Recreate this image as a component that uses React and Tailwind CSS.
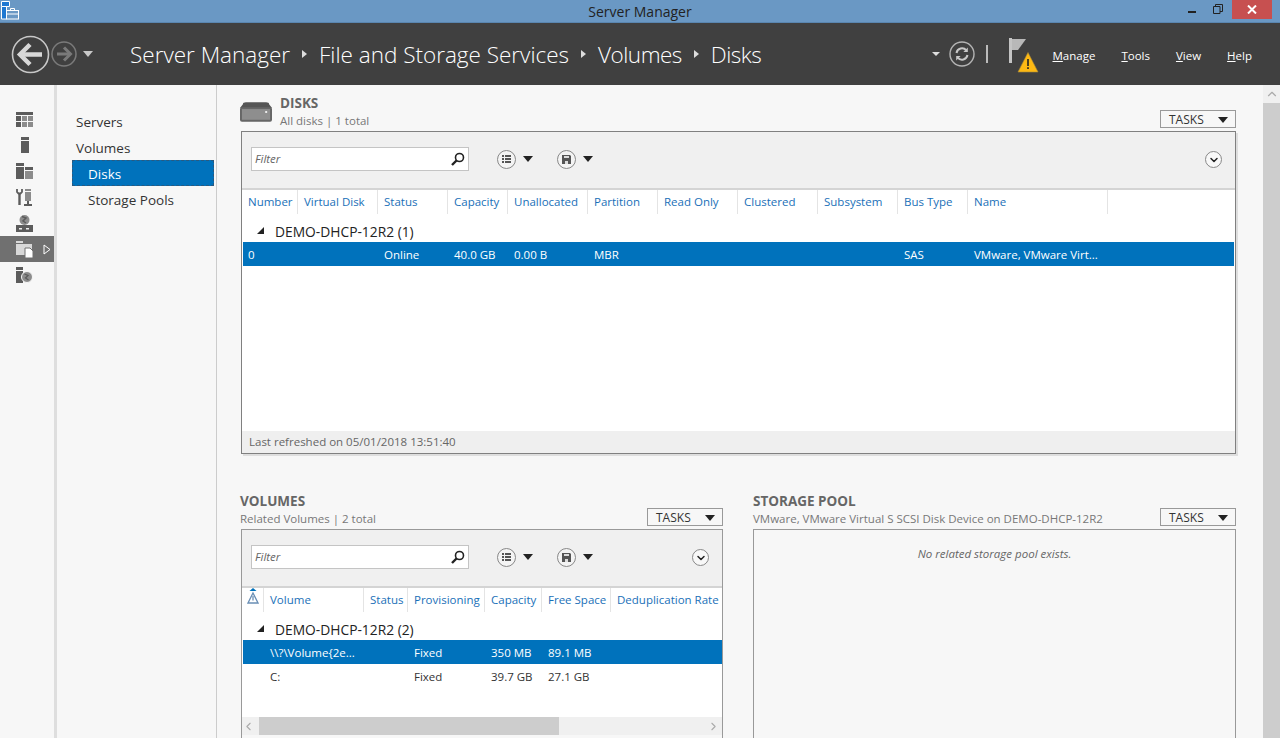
import { ChevronDown, ChevronLeft, ChevronRight, ChevronUp } from 'lucide-react';

const diskColumns = [
  ['Number', 56], ['Virtual Disk', 80], ['Status', 70], ['Capacity', 60], ['Unallocated', 80],
  ['Partition', 70], ['Read Only', 80], ['Clustered', 80], ['Subsystem', 80], ['Bus Type', 70], ['Name', 140],
];
const diskRow = ['0', '', 'Online', '40.0 GB', '0.00 B', 'MBR', '', '', '', 'SAS', 'VMware, VMware Virt...'];

const volumeColumns = [
  ['', 22], ['Volume', 100], ['Status', 44], ['Provisioning', 77], ['Capacity', 57], ['Free Space', 69], ['Deduplication Rate', 112],
];
const volumeRows = [
  ['', '\\\\?\\Volume{2e...', '', 'Fixed', '350 MB', '89.1 MB', ''],
  ['', 'C:', '', 'Fixed', '39.7 GB', '27.1 GB', ''],
];

function Caret({ className = '' }) {
  return <span className={`inline-block w-0 h-0 border-x-[5.5px] border-x-transparent border-t-[6px] border-t-[#222] ${className}`} />;
}

function BackIcon() {
  return (
    <svg width="39" height="39" viewBox="0 0 39 39" fill="none">
      <circle cx="19.5" cy="19.5" r="18" stroke="#c8c8c8" strokeWidth="1.6" />
      <path d="M9 19.5h22" stroke="#d8d8d8" strokeWidth="4.5" />
      <path d="M19 9.5 9 19.5l10 10" stroke="#d8d8d8" strokeWidth="4.5" />
    </svg>
  );
}

function ForwardIcon() {
  return (
    <svg width="26" height="26" viewBox="0 0 26 26" fill="none">
      <circle cx="13" cy="13" r="12" stroke="#7a7a7a" strokeWidth="1.5" />
      <path d="M6 13h13" stroke="#7a7a7a" strokeWidth="3" />
      <path d="M13 6.5 19.5 13 13 19.5" stroke="#7a7a7a" strokeWidth="3" />
    </svg>
  );
}

function RefreshIcon() {
  return (
    <svg width="26" height="26" viewBox="0 0 26 26" fill="none">
      <circle cx="13" cy="13" r="12" stroke="#b4b4b4" strokeWidth="1.4" />
      <path d="M7.5 12a5.6 5.6 0 0 1 9.8-2.6" stroke="#c8c8c8" strokeWidth="2" />
      <path d="M18.5 14a5.6 5.6 0 0 1-9.8 2.6" stroke="#c8c8c8" strokeWidth="2" />
      <path d="M18.8 6.5v4.4h-4.4z" fill="#c8c8c8" />
      <path d="M7.2 19.5v-4.4h4.4z" fill="#c8c8c8" />
    </svg>
  );
}

function FlagIcon() {
  return (
    <svg width="30" height="37" viewBox="0 0 30 37" fill="none">
      <rect x="0" y="0" width="3" height="25" fill="#c4c4c4" />
      <path d="M3 1h14L9 12H3z" fill="#b8b8b8" />
      <path d="M19 14.5 29 34H9z" fill="#fdb813" stroke="#a88a3a" strokeWidth="0.6" />
      <path d="M19 21v7" stroke="#222" strokeWidth="1.6" />
      <rect x="18.2" y="29.2" width="1.6" height="1.8" fill="#222" />
    </svg>
  );
}

function AppIcon() {
  return (
    <svg width="18" height="19" viewBox="0 0 18 19" fill="none">
      <path d="M.5.5h8v5h-8z" fill="#1f78d1" stroke="#fff" />
      <path d="M.5 5.5v12.500h5" fill="#1f78d1" />
      <path d="M.5 5.500h5v12.500h-5z" fill="#1f78d1" stroke="#fff" />
      <rect x="5.500" y="9.500" width="12" height="8.500" fill="#6a98c4" stroke="#fff" />
      <path d="M9.500 9.500V7.500h4v2M5.500 13h12" stroke="#fff" />
    </svg>
  );
}

function RailIcon({ name, active }) {
  const c = '#5c5c5c';
  const l = '#8c8c8c';
  if (name === 'dashboard') {
    return (
      <svg width="17" height="15" viewBox="0 0 17 15">
        <rect width="17" height="3" fill={c} />
        <rect y="4" width="5" height="5" fill={c} /><rect x="6" y="4" width="5" height="5" fill={l} /><rect x="12" y="4" width="5" height="5" fill={l} />
        <rect y="10" width="5" height="5" fill={c} /><rect x="6" y="10" width="5" height="5" fill={l} /><rect x="12" y="10" width="5" height="5" fill={l} />
      </svg>
    );
  }
  if (name === 'local') {
    return (
      <svg width="8" height="16" viewBox="0 0 8 16">
        <rect width="8" height="3" fill={c} /><rect y="4" width="8" height="12" fill={c} />
      </svg>
    );
  }
  if (name === 'all') {
    return (
      <svg width="17" height="16" viewBox="0 0 17 16">
        <rect width="8" height="3" fill={c} /><rect y="4" width="8" height="12" fill={c} />
        <rect x="9" y="4" width="8" height="3" fill={c} /><rect x="9" y="8" width="8" height="8" fill={l} />
      </svg>
    );
  }
  if (name === 'tools') {
    return (
      <svg width="17" height="17" viewBox="0 0 17 17" fill="none">
        <path d="M1 0v3l1.500 1.500h2L6 3V0" stroke={c} strokeWidth="1.800" />
        <path d="M3.500 4.500V16" stroke={c} strokeWidth="2.400" />
        <rect x="9" y="0" width="6" height="2" fill={l} /><rect x="9" y="3" width="6" height="9" fill={l} />
        <path d="M12 12v3" stroke={c} strokeWidth="2" />
        <path d="M8 16h8" stroke={c} strokeWidth="2" />
      </svg>
    );
  }
  if (name === 'network') {
    return (
      <svg width="17" height="17" viewBox="0 0 17 17">
        <circle cx="8.500" cy="5" r="5" fill={l} />
        <path d="M6 1.500 10 3 7 6l3 2" stroke={c} strokeWidth="1.500" fill="none" />
        <rect y="10" width="17" height="7" fill={c} />
        <rect x="3" y="13" width="3" height="1.500" fill="#eee" /><rect x="10" y="13" width="3" height="1.500" fill="#eee" />
      </svg>
    );
  }
  if (name === 'storage') {
    return (
      <svg width="17" height="17" viewBox="0 0 17 17">
        <path d="M0 0h7v2H0z" fill={active ? '#d8d8d8' : c} />
        <rect y="3" width="16" height="11" fill={active ? '#d8d8d8' : c} />
        <path d="M9 7h5l3 3v7H9z" fill="#fff" stroke="#707070" strokeWidth="1" />
      </svg>
    );
  }
  return (
    <svg width="17" height="16" viewBox="0 0 17 16">
      <rect width="7" height="3" fill={c} /><rect y="4" width="7" height="12" fill={c} />
      <circle cx="11" cy="10" r="5.500" fill={l} stroke="#f7f7f7" />
      <path d="M8.500 7 12 8.500 9.500 11l3 2" stroke={c} strokeWidth="1.300" fill="none" />
    </svg>
  );
}

function SearchGlyph() {
  return (
    <svg width="14" height="14" viewBox="0 0 14 14" fill="none">
      <circle cx="8.500" cy="5.500" r="4" stroke="#222" strokeWidth="1.600" />
      <path d="M5.500 8.500 1 13" stroke="#222" strokeWidth="2.400" />
    </svg>
  );
}

function RoundBtn({ kind }) {
  return (
    <span className="w-[19px] h-[19px] rounded-full border border-[#888] bg-[#f4f4f4] flex items-center justify-center">
      {kind === 'list' ? (
        <svg width="9" height="8" viewBox="0 0 9 8" fill="#555">
          <rect width="2" height="2" /><rect x="3" width="6" height="2" />
          <rect y="3" width="2" height="2" /><rect x="3" y="3" width="6" height="2" />
          <rect y="6" width="2" height="2" /><rect x="3" y="6" width="6" height="2" />
        </svg>
      ) : (
        <svg width="9" height="9" viewBox="0 0 9 9">
          <path d="M0 0h8l1 1v8H0z" fill="#555" />
          <rect x="2" y="1" width="5" height="2" fill="#ddd" />
          <rect x="3" y="6" width="3" height="3" fill="#ddd" />
        </svg>
      )}
    </span>
  );
}

function Toolbar({ collapseClass }) {
  return (
    <div className="h-[58px] bg-[#f0f0f0] border-b-2 border-[#d4d4d4] flex items-start pt-[15px] pl-[9px] shrink-0">
      <div className="w-[218px] h-[24px] bg-white border border-[#c4c4c4] flex items-center justify-between pl-[3px] pr-[3px]">
        <span className="italic text-[11.500px] text-[#666]">Filter</span>
        <SearchGlyph />
      </div>
      <div className="flex items-center h-[24px] ml-[28px] gap-[7px]"><RoundBtn kind="list" /><Caret /></div>
      <div className="flex items-center h-[24px] ml-[24px] gap-[7px]"><RoundBtn kind="save" /><Caret /></div>
      <span className={`w-[17px] h-[17px] mt-[4px] rounded-full border border-[#888] bg-[#f8f8f8] flex items-center justify-center ml-auto ${collapseClass}`}>
        <ChevronDown size={12} strokeWidth={3} color="#222" />
      </span>
    </div>
  );
}

function HeaderRow({ columns, sortIcon }) {
  return (
    <div className="flex h-[24px] text-[11.500px] text-[#1a70b8] shrink-0">
      {columns.map(([label, width], i) => (
        <div key={i} style={{ width }} className={`h-full pt-[3px] pl-[6px] whitespace-nowrap overflow-hidden shrink-0 ${i === columns.length - 1 && sortIcon ? '' : 'border-r border-[#e4e4e4]'}`}>
          {label}
          {sortIcon && i === 0 && (
            <svg width="12" height="18" viewBox="0 0 12 18" className="-mt-[3px] -ml-[1px]">
              <path d="M6 0 9.500 3h-7z" fill="#0072bc" />
              <path d="M6 5 11 15H1z" fill="none" stroke="#6a8fb5" strokeWidth="1.300" />
              <path d="M6 8v4.500" stroke="#6a8fb5" strokeWidth="1.300" />
            </svg>
          )}
        </div>
      ))}
    </div>
  );
}

function GroupRow({ label }) {
  return (
    <div className="h-[23px] mt-[5px] flex items-center pl-[15px] text-[13.800px] text-[#222] shrink-0">
      <span className="w-0 h-0 border-l-[7px] border-l-transparent border-b-[7px] border-b-[#222] mr-[11px]" />
      <span className="pt-[3px]">{label}</span>
    </div>
  );
}

function DataRow({ columns, cells, selected }) {
  return (
    <div className={`flex h-[24px] items-center pt-[1px] text-[11.500px] shrink-0 ${selected ? 'bg-[#0072bc] text-white' : 'text-[#333]'}`}>
      {columns.map(([, width], i) => (
        <div key={i} style={{ width }} className="pl-[5px] whitespace-nowrap overflow-hidden shrink-0">{cells[i]}</div>
      ))}
    </div>
  );
}

function TasksBtn() {
  return (
    <div className="w-[76px] h-[18px] mb-[1px] pt-[1px] bg-[#f7f7f7] border border-[#999] flex items-center justify-between pl-[8px] pr-[7px] text-[12px] text-[#333] shrink-0">
      TASKS<Caret />
    </div>
  );
}

function SectionHead({ title, sub, icon }) {
  return (
    <div className="flex items-end justify-between">
      <div className="flex items-center min-w-0">
        {icon && (
          <svg width="32" height="20" viewBox="0 0 33 20" className="mr-[8px] shrink-0">
            <path d="M3 2Q3 0 6 0h21q3 0 3 2l3 4H0z" fill="#555" />
            <rect y="5" width="33" height="15" rx="2" fill="#666" />
            <rect x="2" y="7" width="29" height="11" fill="#8e8e8e" />
            <rect x="26" y="9" width="2" height="2" fill="#eee" />
          </svg>
        )}
        <div>
          <div className="text-[13.500px] leading-[18px] font-bold text-[#666]">{title}</div>
          <div className="text-[11.500px] leading-[17px] text-[#777] whitespace-nowrap">{sub}</div>
        </div>
      </div>
      <TasksBtn />
    </div>
  );
}

export default function App() {
  const rail = ['dashboard', 'local', 'all', 'tools', 'network', 'storage', 'wsus'];
  return (
    <div className="h-[738px] w-[1280px] overflow-hidden flex flex-col bg-[#f7f7f7]" style={{ fontFamily: '"Open Sans", "Noto Sans", sans-serif' }}>
      <div className="h-[23px] bg-[#6a98c4] border-b border-[#5a86b0] relative flex items-center justify-center text-[14px] text-[#222] shrink-0">
        <span className="absolute left-[1px] top-[1px]"><AppIcon /></span>
        Server Manager
        <div className="absolute right-[8px] top-0 flex items-start">
          <span className="w-[8px] h-[2px] bg-[#222] mt-[11px] mr-[17px]" />
          <svg width="10" height="10" viewBox="0 0 10 10" fill="none" className="mt-[4px] mr-[9px]">
            <path d="M2.500 2.500V.5h7v7H7" stroke="#222" />
            <path d="M.5 2.500h6.500v7H.5z" stroke="#222" />
          </svg>
          <span className="w-[40px] h-[19px] bg-[#c75050] flex items-center justify-center">
            <svg width="10" height="9" viewBox="0 0 10 9" fill="none"><path d="M1 .5l8 8M9 .5l-8 8" stroke="#fff" strokeWidth="2" /></svg>
          </span>
        </div>
      </div>

      <div className="h-[62px] bg-[#404040] flex items-center text-white shrink-0">
        <div className="ml-[11px]"><BackIcon /></div>
        <div className="ml-[1px]"><ForwardIcon /></div>
        <span className="ml-[6px] w-0 h-0 border-x-[5px] border-x-transparent border-t-[6px] border-t-[#c8c8c8]" />
        <div className="ml-[37px] mt-[3px] flex items-center text-[22.500px] font-light leading-none whitespace-nowrap">
          {['Server Manager', 'File and Storage Services', 'Volumes', 'Disks'].map((crumb, i) => (
            <span key={crumb} className={`flex items-center ${i > 1 ? 'tracking-[-0.5px]' : ''}`}>
              {i > 0 && <span className="mx-[12px] -mt-[3px] w-0 h-0 border-y-[4.500px] border-y-transparent border-l-[5px] border-l-[#ddd]" />}
              {crumb}
            </span>
          ))}
        </div>
        <span className="ml-auto w-0 h-0 border-x-[4px] border-x-transparent border-t-[4px] border-t-[#ddd]" />
        <div className="ml-[9px]"><RefreshIcon /></div>
        <span className="ml-[11px] w-[2px] h-[18px] bg-[#bbb]" />
        <div className="ml-[21px] mt-[4px]"><FlagIcon /></div>
        <div className="flex items-center ml-[14px] mr-[28px] mt-[3px] text-[11.500px] gap-[26px]">
          {['Manage', 'Tools', 'View', 'Help'].map(item => (
            <span key={item}><span className="underline">{item[0]}</span>{item.slice(1)}</span>
          ))}
        </div>
      </div>

      <div className="flex flex-1 min-h-0">
        <div className="w-[57px] border-r-[3px] border-[#dedede] pt-[21px] shrink-0">
          {rail.map(name => (
            <div key={name} className={`h-[26px] pl-[16px] flex items-center ${name === 'storage' ? 'bg-[#707070]' : ''}`}>
              <span className="w-[17px] flex justify-center"><RailIcon name={name} active={name === 'storage'} /></span>
              {name === 'storage' && (
                <svg width="8" height="11" viewBox="0 0 8 11" fill="none" className="ml-[10px]">
                  <path d="M1 1l6 4.500-6 4.500z" stroke="#fff" />
                </svg>
              )}
            </div>
          ))}
        </div>

        <div className="w-[160px] border-r border-[#ccc] pt-[23px] pl-[15px] text-[13.500px] text-[#333] shrink-0">
          <div className="h-[26px] pl-[4px] pt-[2px] flex items-center">Servers</div>
          <div className="h-[26px] pl-[4px] pt-[2px] flex items-center">Volumes</div>
          <div className="h-[26px] w-[142px] pl-[15px] pt-[3px] flex items-center bg-[#0072bc] text-white border border-dashed border-[#2a5a80]">Disks</div>
          <div className="h-[26px] pl-[16px] pt-[2px] flex items-center">Storage Pools</div>
        </div>

        <div className="flex-1 min-w-0 pt-[9px] pl-[23px] pr-[27px]">
          <SectionHead title="DISKS" sub="All disks | 1 total" icon />
          <div className="mt-[2px] ml-[1px] h-[323px] border border-[#808080] shadow-[2px_2px_0_#dedede] bg-white flex flex-col">
            <Toolbar collapseClass="mr-[13px]" />
            <HeaderRow columns={diskColumns} />
            <GroupRow label="DEMO-DHCP-12R2 (1)" />
            <div className="pl-[1px] mr-px"><DataRow columns={diskColumns} cells={diskRow} selected /></div>
            <div className="mt-auto h-[22px] bg-[#efefef] pl-[7px] flex items-center text-[11.500px] text-[#666]">Last refreshed on 05/01/2018 13:51:40</div>
          </div>

          <div className="flex mt-[38px] gap-[30px]">
            <div className="w-[483px] shrink-0">
              <SectionHead title="VOLUMES" sub="Related Volumes | 2 total" />
              <div className="mt-[2px] ml-[1px] h-[260px] border border-[#999] bg-white flex flex-col">
                <Toolbar collapseClass="mr-[13px]" />
                <HeaderRow columns={volumeColumns} sortIcon />
                <GroupRow label="DEMO-DHCP-12R2 (2)" />
                <div className="pl-[1px]">
                  <DataRow columns={volumeColumns} cells={volumeRows[0]} selected />
                  <DataRow columns={volumeColumns} cells={volumeRows[1]} />
                </div>
                <div className="h-[18px] mt-[29px] bg-[#f0f0f0] flex items-center shrink-0">
                  <ChevronLeft size={13} color="#aaa" />
                  <div className="w-[300px] h-full bg-[#cdcdcd] ml-[4px]" />
                  <ChevronRight size={13} color="#aaa" className="ml-auto mr-[2px]" />
                </div>
                <div className="flex-1 bg-[#f7f7f7]" />
              </div>
            </div>

            <div className="flex-1 min-w-0">
              <SectionHead title="STORAGE POOL" sub="VMware, VMware Virtual S SCSI Disk Device on DEMO-DHCP-12R2" />
              <div className="mt-[2px] h-[260px] border border-[#999] bg-[#f7f7f7] pt-[15px] text-center italic text-[11.500px] text-[#666]">
                No related storage pool exists.
              </div>
            </div>
          </div>
        </div>

        <div className="w-[17px] bg-[#cdcdcd] shrink-0">
          <div className="h-[18px] bg-[#f0f0f0] flex items-center justify-center"><ChevronUp size={14} color="#aaa" /></div>
        </div>
      </div>
    </div>
  );
}
